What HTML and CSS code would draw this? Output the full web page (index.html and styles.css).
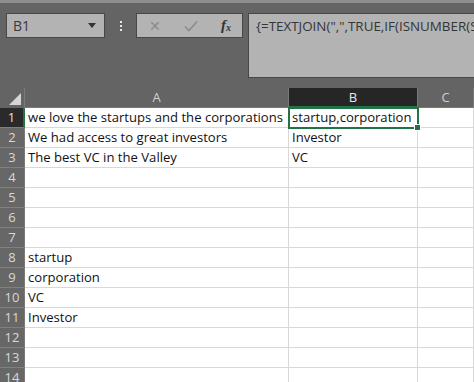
FILE: index.html
```html
<!DOCTYPE html>
<html lang="en">
<head>
    <meta charset="UTF-8">
    <title>TEXTJOIN</title>
    <link rel="stylesheet" href="styles.css">
</head>
<body>
    <div class="top-strip"></div>
    <div class="formula-bar">
        <div class="name-box">
            <span>B1</span>
            <span class="caret"></span>
        </div>
        <div class="grip"><i></i><i></i><i></i></div>
        <div class="fx-buttons">
            <span class="btn-cancel">&#x2715;</span>
            <svg class="btn-ok" width="14" height="12" viewBox="0 0 14 12"><path d="M1 6.5 L5 10.5 L13 1.5" fill="none" stroke="#8a8a8a" stroke-width="1.6"/></svg>
            <span class="btn-fx">f<sub>x</sub></span>
        </div>
        <div class="formula-input">{=TEXTJOIN(",",TRUE,IF(ISNUMBER(SEARCH(</div>
    </div>

    <div class="sheet">
        <div class="corner"><span class="tri"></span></div>
        <div class="col-head">A</div>
        <div class="col-head active">B</div>
        <div class="col-head">C</div>

        <div class="row-head active">1</div>
        <div class="cell">we love the startups and the corporations</div>
        <div class="cell selected">startup,corporation<span class="handle"></span></div>
        <div class="cell"></div>

        <div class="row-head">2</div>
        <div class="cell">We had access to great investors</div>
        <div class="cell">Investor</div>
        <div class="cell"></div>

        <div class="row-head">3</div>
        <div class="cell">The best VC in the Valley</div>
        <div class="cell">VC</div>
        <div class="cell"></div>

        <div class="row-head">4</div>
        <div class="cell"></div><div class="cell"></div><div class="cell"></div>
        <div class="row-head">5</div>
        <div class="cell"></div><div class="cell"></div><div class="cell"></div>
        <div class="row-head">6</div>
        <div class="cell"></div><div class="cell"></div><div class="cell"></div>
        <div class="row-head">7</div>
        <div class="cell"></div><div class="cell"></div><div class="cell"></div>

        <div class="row-head">8</div>
        <div class="cell">startup</div><div class="cell"></div><div class="cell"></div>
        <div class="row-head">9</div>
        <div class="cell">corporation</div><div class="cell"></div><div class="cell"></div>
        <div class="row-head">10</div>
        <div class="cell">VC</div><div class="cell"></div><div class="cell"></div>
        <div class="row-head">11</div>
        <div class="cell">Investor</div><div class="cell"></div><div class="cell"></div>

        <div class="row-head">12</div>
        <div class="cell"></div><div class="cell"></div><div class="cell"></div>
        <div class="row-head">13</div>
        <div class="cell"></div><div class="cell"></div><div class="cell"></div>
        <div class="row-head">14</div>
        <div class="cell"></div><div class="cell"></div><div class="cell"></div>
    </div>
</body>
</html>
```

FILE: styles.css
```css
body {
    margin: 0;
    background-color: #646464;
    font-family: "Open Sans", "Liberation Sans", sans-serif;
    overflow: hidden;
    width: 474px;
    height: 382px;
}
.top-strip {
    height: 3px;
    background-color: #8e8e8e;
}
.formula-bar {
    display: flex;
    align-items: flex-start;
    padding-top: 10px;
    padding-left: 6px;
    height: 75px;
}
.name-box {
    width: 83px;
    height: 23px;
    border: 1px solid #474747;
    background-color: #b3b3b3;
    display: flex;
    align-items: center;
    justify-content: space-between;
    padding: 0 8px 0 6px;
    font-size: 14px;
    color: #3a3a3a;
}
.caret {
    width: 0;
    height: 0;
    border-left: 4px solid transparent;
    border-right: 4px solid transparent;
    border-top: 5px solid #333;
}
.grip {
    width: 31px;
    height: 25px;
    display: flex;
    flex-direction: column;
    align-items: center;
    justify-content: center;
    gap: 2px;
}
.grip i {
    width: 2px;
    height: 2px;
    background-color: #e8e8e8;
}
.fx-buttons {
    width: 107px;
    height: 25px;
    border: 1px solid #474747;
    background-color: #b3b3b3;
    display: flex;
    align-items: center;
    justify-content: space-between;
    padding: 0 11px 0 12px;
    box-sizing: border-box;
}
.btn-cancel {
    color: #8a8a8a;
    font-size: 14px;
    font-family: "DejaVu Sans", sans-serif;
}
.btn-fx {
    font-family: "Liberation Serif", serif;
    font-style: italic;
    font-weight: bold;
    font-size: 15px;
    color: #333;
}
.btn-fx sub {
    font-size: 10px;
    vertical-align: -1px;
}
.formula-input {
    flex: 1;
    margin-left: 5px;
    height: 65px;
    border: 1px solid #474747;
    border-right: none;
    background-color: #b3b3b3;
    font-size: 13.4px;
    color: #353535;
    padding: 3px 0 0 7px;
    white-space: nowrap;
    overflow: hidden;
    box-sizing: border-box;
}
.sheet {
    display: grid;
    grid-template-columns: 25px 264px 129px 56px;
    grid-template-rows: 20px repeat(14, 20px);
    background-color: #fff;
}
.corner {
    background-color: #646464;
    position: relative;
    border-right: 1px solid #7a7a7a;
}
.tri {
    position: absolute;
    right: 3px;
    bottom: 3px;
    width: 0;
    height: 0;
    border-left: 12px solid transparent;
    border-bottom: 12px solid #d6d6d6;
}
.col-head {
    background-color: #646464;
    color: #d0d0d0;
    font-size: 13px;
    text-align: center;
    line-height: 19px;
    border-right: 1px solid #7a7a7a;
    border-bottom: 1px solid #7a7a7a;
}
.col-head.active {
    background-color: #262626;
    color: #e6e6e6;
    border-bottom: 2px solid #217346;
    line-height: 18px;
}
.row-head {
    background-color: #676767;
    color: #d8d8d8;
    font-size: 13px;
    text-align: center;
    line-height: 19px;
    border-bottom: 1px solid #808080;
    border-right: 1px solid #7a7a7a;
}
.row-head.active {
    background-color: #2a2a2a;
    color: #e0e0e0;
    border-right: 2px solid #217346;
}
.cell {
    font-size: 13.1px;
    color: #111;
    line-height: 19px;
    padding-left: 3px;
    white-space: nowrap;
    border-right: 1px solid #d8d8d8;
    border-bottom: 1px solid #d8d8d8;
    position: relative;
}
.cell.selected {
    outline: 2px solid #217346;
    outline-offset: -1px;
    z-index: 1;
}
.handle {
    position: absolute;
    right: -4px;
    bottom: -4px;
    width: 5px;
    height: 5px;
    background-color: #217346;
    border: 1px solid #fff;
}
```
